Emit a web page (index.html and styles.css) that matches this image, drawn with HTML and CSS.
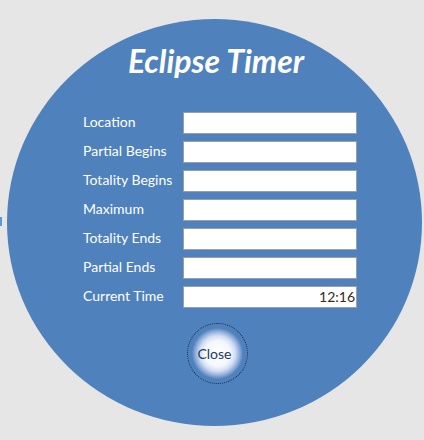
FILE: index.html
```html
<!DOCTYPE html>
<html>
<head>
<meta charset="utf-8">
<link rel="stylesheet" href="styles.css">
</head>
<body>
<div class="edge-mark"></div>
<div class="disc">
  <h1 class="title">Eclipse Timer</h1>
  <div class="form">
    <label class="lbl">Location</label><div class="field"></div>
    <label class="lbl">Partial Begins</label><div class="field"></div>
    <label class="lbl">Totality Begins</label><div class="field"></div>
    <label class="lbl">Maximum</label><div class="field"></div>
    <label class="lbl">Totality Ends</label><div class="field"></div>
    <label class="lbl">Partial Ends</label><div class="field"></div>
    <label class="lbl">Current Time</label><div class="field time">12:16</div>
  </div>
  <div class="close-ring"><div class="close-btn">Close</div></div>
</div>
</body>
</html>
```
FILE: styles.css
```css
html, body {
  margin: 0;
  padding: 0;
}
body {
  width: 424px;
  height: 440px;
  background: #e6e6e6;
  overflow: hidden;
  position: relative;
  font-family: Lato, "Open Sans", sans-serif;
}
.edge-mark {
  position: absolute;
  left: 0;
  top: 217px;
  width: 2px;
  height: 9px;
  background: #5b9bd5;
}
.disc {
  margin: 19px 0 0 7px;
  width: 415px;
  height: 407px;
  border-radius: 50%;
  background: #4f81bd;
  display: flex;
  flex-direction: column;
  box-sizing: border-box;
  padding-top: 24px;
}
.title {
  margin: 0;
  text-align: center;
  color: #fff;
  font-family: Lato, sans-serif;
  font-weight: bold;
  font-style: italic;
  font-size: 32px;
  line-height: 36px;
  padding-left: 3px;
}
.form {
  margin: 33px 0 0 76px;
  display: grid;
  grid-template-columns: 100px 174px;
  grid-auto-rows: 22px;
  row-gap: 7px;
}
.lbl {
  color: #fff;
  font-size: 14px;
  line-height: 20px;
  white-space: nowrap;
}
.field {
  background: #fff;
  border: 1px solid #9a9fa6;
  box-sizing: border-box;
  font-size: 14px;
  line-height: 20px;
  text-align: right;
  padding-right: 1px;
  color: #3a2a22;
}
.close-ring {
  margin: 15px 0 0 180px;
  width: 61px;
  height: 61px;
  box-sizing: border-box;
  border: 1px dotted #1a2a48;
  border-radius: 50%;
  padding: 1px;
}
.close-btn {
  width: 100%;
  height: 100%;
  border-radius: 50%;
  background: radial-gradient(circle closest-side, #ffffff 0%, #f4f7fd 45%, #d2def3 62%, #8eabd8 78%, #4f81bd 90%);
  display: flex;
  align-items: center;
  justify-content: center;
  color: #1f3864;
  font-size: 14px;
  padding-right: 6px;
  box-sizing: border-box;
}
```
